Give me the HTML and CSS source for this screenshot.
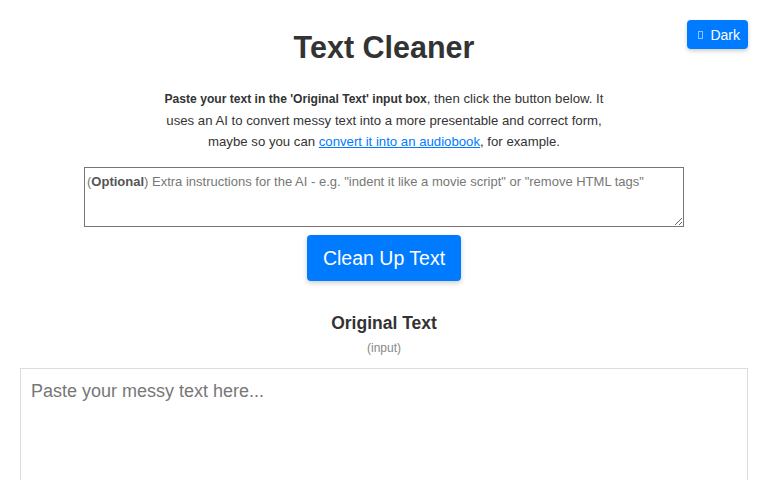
FILE: index.html
```html
<!DOCTYPE html>
<html>
<head>
<meta charset="utf-8">
<link rel="stylesheet" href="styles.css">
</head>
<body>
<button class="theme-btn"><span class="tofu"></span>Dark</button>
<main class="page">
  <h1 class="title">Text Cleaner</h1>
  <p class="intro"><b>Paste your text in the 'Original Text' input box</b>, then click the button below. It uses an AI to convert messy text into a more presentable and correct form, maybe so you can <a href="#">convert it into an audiobook</a>, for example.</p>
  <div class="extra"><span class="ph">(<b>Optional</b>) Extra instructions for the AI - e.g. "indent it like a movie script" or "remove HTML tags"</span></div>
  <button class="clean-btn">Clean Up Text</button>
  <h2 class="section-title">Original Text</h2>
  <div class="section-sub">(input)</div>
  <textarea class="input" placeholder="Paste your messy text here..."></textarea>
</main>
</body>
</html>
```
FILE: styles.css
```css
html, body { margin: 0; padding: 0; background: #fff; }
body { font-family: "Liberation Sans", Arial, sans-serif; color: #333; }
.theme-btn {
  position: absolute; top: 20px; right: 20px;
  height: 29px; padding: 0 8px 0 11px;
  background: #007bff; color: #fff; border: none; border-radius: 4px;
  font-family: "Liberation Sans", Arial, sans-serif; font-size: 14px;
  display: flex; align-items: center; gap: 7px;
  box-shadow: 0 2px 4px rgba(0,0,0,0.2);
}
.tofu { width: 5px; height: 8px; border: 1px solid rgba(255,255,255,0.55); box-sizing: border-box; }
.page { display: flex; flex-direction: column; align-items: center; padding: 0 20px; }
.title { font-size: 30.5px; font-weight: bold; margin: 29px 0 0; line-height: 37px; color: #333; font-family: "Liberation Sans", Arial, sans-serif; }
.intro { width: 445px; text-align: center; font-size: 13.2px; line-height: 21px; margin: 22px 0 0; color: #333; }
.intro b { font-weight: bold; font-size: 12.1px; }
.intro a { color: #007bff; text-decoration: underline; }
.extra {
  width: 600px; height: 60px; box-sizing: border-box; margin-top: 15px;
  border: 1px solid #767676; padding: 6px 2px 5px; font-size: 13px; color: #777;
  resize: vertical; overflow: auto; text-align: left; line-height: 16px;
}
.extra b { color: #555; }
.clean-btn {
  margin-top: 8px; width: 154px; height: 46px;
  background: #007bff; color: #fff; border: none; border-radius: 4px;
  font-family: "Liberation Sans", Arial, sans-serif; font-size: 19.5px;
  box-shadow: 0 2px 5px rgba(0,0,0,0.2);
}
.section-title { font-size: 17.5px; font-weight: bold; margin: 31px 0 0; line-height: 22px; color: #333; }
.section-sub { font-size: 12px; color: #888; margin-top: 7px; line-height: 14px; }
.input {
  align-self: stretch; height: 200px; margin-top: 13px; box-sizing: border-box;
  border: 1px solid #ddd; padding: 12px 10px; resize: vertical;
  font-family: "Liberation Sans", Arial, sans-serif; font-size: 18px; color: #333;
}
.input::placeholder { color: #777; }
```
